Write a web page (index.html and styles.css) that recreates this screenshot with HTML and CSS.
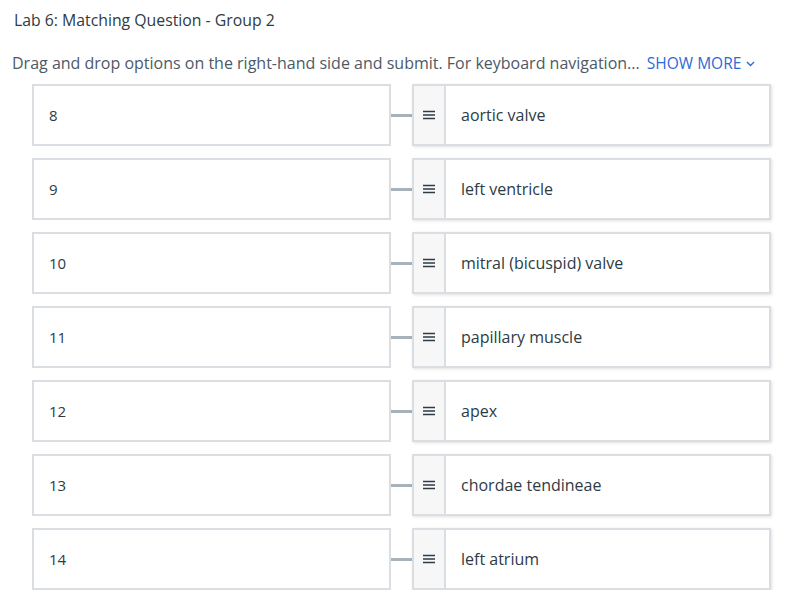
FILE: index.html
```html
<!DOCTYPE html>
<html lang="en">
<head>
  <meta charset="UTF-8" />
  <title>Lab 6: Matching Question - Group 2</title>
  <link rel="stylesheet" href="styles.css">
</head>
<body>
  <div class="question">
    <h2 class="question-title">Lab 6: Matching Question - Group 2</h2>
    <p class="instructions">
      Drag and drop options on the right-hand side and submit. For keyboard navigation...
      <a href="#" class="show-more">SHOW MORE
        <svg width="9" height="6" viewBox="0 0 9 6"><path d="M1 1l3.5 3.5L8 1" fill="none" stroke="#2d6ad6" stroke-width="1.4"/></svg>
      </a>
    </p>

    <div class="pairs">
      <div class="pair">
        <div class="prompt">8</div>
        <div class="link"></div>
        <div class="answer"><span class="handle"><svg width="12" height="10" viewBox="0 0 12 10"><path d="M0 1.5h12M0 5h12M0 8.5h12" stroke="#2d3b45" stroke-width="1.3"/></svg></span><span class="answer-text">aortic valve</span></div>
      </div>
      <div class="pair">
        <div class="prompt">9</div>
        <div class="link"></div>
        <div class="answer"><span class="handle"><svg width="12" height="10" viewBox="0 0 12 10"><path d="M0 1.5h12M0 5h12M0 8.5h12" stroke="#2d3b45" stroke-width="1.3"/></svg></span><span class="answer-text">left ventricle</span></div>
      </div>
      <div class="pair">
        <div class="prompt">10</div>
        <div class="link"></div>
        <div class="answer"><span class="handle"><svg width="12" height="10" viewBox="0 0 12 10"><path d="M0 1.5h12M0 5h12M0 8.5h12" stroke="#2d3b45" stroke-width="1.3"/></svg></span><span class="answer-text">mitral (bicuspid) valve</span></div>
      </div>
      <div class="pair">
        <div class="prompt">11</div>
        <div class="link"></div>
        <div class="answer"><span class="handle"><svg width="12" height="10" viewBox="0 0 12 10"><path d="M0 1.5h12M0 5h12M0 8.5h12" stroke="#2d3b45" stroke-width="1.3"/></svg></span><span class="answer-text">papillary muscle</span></div>
      </div>
      <div class="pair">
        <div class="prompt">12</div>
        <div class="link"></div>
        <div class="answer"><span class="handle"><svg width="12" height="10" viewBox="0 0 12 10"><path d="M0 1.5h12M0 5h12M0 8.5h12" stroke="#2d3b45" stroke-width="1.3"/></svg></span><span class="answer-text">apex</span></div>
      </div>
      <div class="pair">
        <div class="prompt">13</div>
        <div class="link"></div>
        <div class="answer"><span class="handle"><svg width="12" height="10" viewBox="0 0 12 10"><path d="M0 1.5h12M0 5h12M0 8.5h12" stroke="#2d3b45" stroke-width="1.3"/></svg></span><span class="answer-text">chordae tendineae</span></div>
      </div>
      <div class="pair">
        <div class="prompt">14</div>
        <div class="link"></div>
        <div class="answer"><span class="handle"><svg width="12" height="10" viewBox="0 0 12 10"><path d="M0 1.5h12M0 5h12M0 8.5h12" stroke="#2d3b45" stroke-width="1.3"/></svg></span><span class="answer-text">left atrium</span></div>
      </div>
    </div>
  </div>
</body>
</html>
```

FILE: styles.css
```css
body {
  margin: 0;
  font-family: "Open Sans", Lato, sans-serif;
  background: #fff;
  color: #2d3b45;
}
.question {
  padding: 10px 12px 0 12px;
}
.question-title {
  margin: 0 0 0 2px;
  font-size: 15.8px;
  font-weight: 400;
  line-height: 20px;
  color: #2d3b45;
}
.instructions {
  margin: 23px 0 0 0;
  font-size: 16px;
  line-height: 20px;
  color: #4d5966;
}
.show-more {
  margin-left: 3px;
  color: #2d6ad6;
  text-decoration: none;
  font-size: 15.5px;
}
.show-more svg {
  vertical-align: 2px;
  margin-left: 1px;
}
.pairs {
  display: flex;
  flex-direction: column;
  gap: 12px;
  margin: 11px 0 0 20px;
}
.pair {
  display: flex;
  align-items: center;
  height: 62px;
}
.prompt {
  box-sizing: border-box;
  width: 359px;
  height: 62px;
  border: 2px solid #dadee2;
  padding-left: 15px;
  display: flex;
  align-items: center;
  font-size: 15px;
}
.link {
  width: 21px;
  height: 3px;
  background: #a8b2bb;
}
.answer {
  box-sizing: border-box;
  width: 359px;
  height: 62px;
  border: 2px solid #dadee2;
  box-shadow: 1px 1px 3px rgba(0, 0, 0, 0.12);
  display: flex;
  align-items: stretch;
}
.handle {
  width: 30px;
  background: #f7f7f8;
  border-right: 2px solid #dadee2;
  display: flex;
  align-items: center;
  justify-content: center;
}
.answer-text {
  display: flex;
  align-items: center;
  padding-left: 15px;
  font-size: 16px;
}
```
